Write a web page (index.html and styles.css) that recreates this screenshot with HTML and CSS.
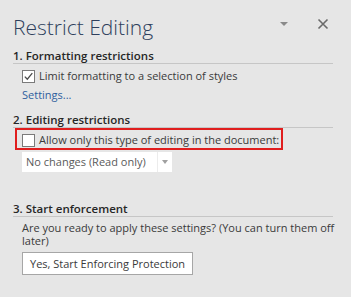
FILE: index.html
```html
<!DOCTYPE html>
<html lang="en">
<head>
  <meta charset="UTF-8" />
  <title>Restrict Editing</title>
  <link rel="stylesheet" href="styles.css">
</head>
<body>
  <div class="pane">
    <div class="pane-header">
      <h1>Restrict Editing</h1>
      <span class="pane-menu"></span>
      <span class="pane-close">
        <svg width="12" height="12" viewBox="0 0 12 12"><path d="M1.5 1.5 L10.5 10.5 M10.5 1.5 L1.5 10.5" stroke="#6b6b6b" stroke-width="1.6" fill="none"/></svg>
      </span>
    </div>

    <div class="section">
      <h2>1. Formatting restrictions</h2>
      <label class="check-row">
        <span class="box">
          <svg width="11" height="11" viewBox="0 0 11 11"><path d="M1.8 5.6 L4.3 8.2 L9.3 2.2" stroke="#4a4a4a" stroke-width="1.3" fill="none"/></svg>
        </span>
        Limit formatting to a selection of styles
      </label>
      <a class="link" href="#">Settings...</a>
    </div>

    <div class="section">
      <h2>2. Editing restrictions</h2>
      <label class="check-row highlight">
        <span class="box"></span>
        Allow only this type of editing in the document:
      </label>
      <div class="select">
        <span class="select-value">No changes (Read only)</span>
        <span class="select-arrow"></span>
      </div>
    </div>

    <div class="section last">
      <h2>3. Start enforcement</h2>
      <p class="note">Are you ready to apply these settings? (You can turn them off later)</p>
      <button class="enforce">Yes, Start Enforcing Protection</button>
    </div>
  </div>
</body>
</html>
```

FILE: styles.css
```css
body {
  margin: 0;
  background-color: #e6e6e6;
  font-family: 'Open Sans', 'Noto Sans', Arial, sans-serif;
  font-size: 11px;
  color: #3a3a3a;
}
.pane {
  padding: 0 18px 0 13px;
}
.pane-header {
  display: flex;
  align-items: flex-start;
  height: 35px;
  padding-top: 13px;
}
h1 {
  flex: 1;
  margin: 0;
  font-size: 21px;
  line-height: 28px;
  font-weight: 300;
  color: #2e3f5c;
}
.pane-menu {
  width: 0;
  height: 0;
  margin-top: 9px;
  margin-right: 29px;
  border-left: 4px solid transparent;
  border-right: 4px solid transparent;
  border-top: 4px solid #8a8a8a;
}
.pane-close {
  display: flex;
  margin-top: 5px;
  margin-right: 4px;
}
h2 {
  margin: 0;
  font-size: 11.5px;
  line-height: 15px;
  font-weight: 600;
  color: #262626;
  border-bottom: 1px solid #c6c6c6;
}
.check-row {
  display: flex;
  align-items: center;
  gap: 4px;
  margin: 4px 0 0 9px;
  line-height: 16px;
}
.box {
  display: flex;
  width: 11px;
  height: 11px;
  border: 1px solid #7a7a7a;
  background: #fff;
}
.check-row.highlight {
  width: fit-content;
  margin: 0 0 0 2px;
  padding: 2px 2px 0 5px;
  border: 2px solid #e01e1e;
}
.link {
  display: block;
  margin: 3px 0 0 9px;
  line-height: 16px;
  color: #2f5f9e;
  text-decoration: none;
}
.section + .section {
  margin-top: 9px;
}
.section.last {
  margin-top: 29px;
}
.select {
  display: flex;
  align-items: center;
  width: 150px;
  height: 20px;
  margin: 2px 0 0 9px;
  background: #fff;
}
.select-value {
  flex: 1;
  padding-left: 4px;
  line-height: 20px;
  white-space: nowrap;
  color: #5a5a5a;
  border-right: 1px solid #ececec;
}
.select-arrow {
  width: 0;
  height: 0;
  margin: 0 4px 0 4px;
  border-left: 3px solid transparent;
  border-right: 3px solid transparent;
  border-top: 4px solid #a0a0a0;
}
.note {
  margin: 4px -12px 0 9px;
  line-height: 13px;
}
.enforce {
  margin: 5px 0 0 9px;
  height: 23px;
  padding: 0 7px;
  background: #fff;
  border: 1px solid #a6a6a6;
  font-family: inherit;
  font-size: 11px;
  color: #3a3a3a;
}
```
